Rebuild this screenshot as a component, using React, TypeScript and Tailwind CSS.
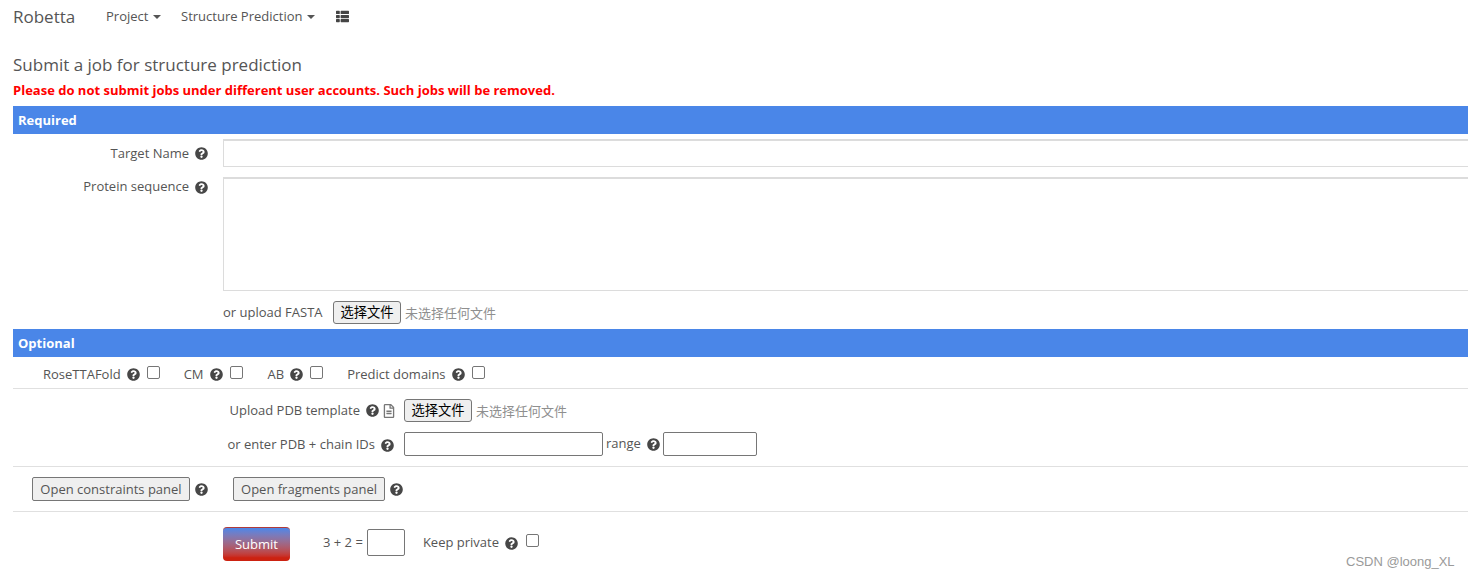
import { FaQuestionCircle, FaRegFileAlt, FaThList } from 'react-icons/fa';

const Help = ({ className = '' }: { className?: string }) => (
  <FaQuestionCircle className={`text-[13px] text-[#474747] shrink-0 ${className}`} />
);

const Caret = () => (
  <span className="inline-block ml-[5px] w-0 h-0 border-x-[4px] border-x-transparent border-t-[4px] border-t-[#555] align-middle" />
);

const Check = ({ className = '' }: { className?: string }) => (
  <span className={`inline-block w-[13px] h-[13px] rounded-[2px] border border-[#767676] bg-white shrink-0 ${className}`} />
);

const Divider = () => <div className="h-px bg-[#e0e0e0]" />;

const FileInput = () => (
  <div className="flex items-center">
    <button className="h-[23px] w-[68px] rounded-[3px] border border-[#767676] bg-[#efefef] text-[13.3px] text-black leading-none">
      选择文件
    </button>
    <span className="ml-[4px] pt-[2px] text-[13px] text-[#8f8f8f]">未选择任何文件</span>
  </div>
);

const SectionBar = ({ title }: { title: string }) => (
  <div className="h-[28px] bg-[#4a86e8] pl-[5px] pt-[2px] flex items-center text-[13px] font-bold text-white">{title}</div>
);

const Label = ({ text, className = '' }: { text: string; className?: string }) => (
  <span className={`flex items-center gap-[6px] ${className}`}>
    {text}
    <Help />
  </span>
);

export default function App() {
  return (
    <div
      className="relative h-[576px] w-[1468px] overflow-hidden bg-white text-[13px] text-[#555]"
      style={{ fontFamily: '"Open Sans", "Noto Sans CJK SC", sans-serif' }}
    >
      <nav className="flex h-[33px] items-center pl-[13px]">
        <span className="w-[93px] text-[17px] text-[#555]">Robetta</span>
        <span className="w-[75px]">Project<Caret /></span>
        <span className="w-[155px]">Structure Prediction<Caret /></span>
        <FaThList className="text-[13px] text-[#444]" />
      </nav>

      <div className="pl-[13px]">
        <h1 className="mt-[20px] h-[24px] text-[17px] leading-[24px] text-[#555]">Submit a job for structure prediction</h1>
        <p className="mt-[4px] h-[25px] text-[13px] font-bold leading-[18px] text-[#ff0000]">
          Please do not submit jobs under different user accounts. Such jobs will be removed.
        </p>

        <SectionBar title="Required" />

        <div className="mt-[5px] flex h-[28px] items-center">
          <div className="flex w-[210px] shrink-0 justify-end pr-[15px] pt-[1px]">
            <Label text="Target Name" />
          </div>
          <input className="h-[28px] w-[1260px] shrink-0 border border-[#dcdcdc] border-t-2 outline-none" />
        </div>

        <div className="mt-[10px] flex h-[114px]">
          <div className="flex w-[210px] shrink-0 justify-end pr-[15px] pt-[1px]">
            <Label text="Protein sequence" className="h-[18px]" />
          </div>
          <textarea className="h-[114px] w-[1260px] shrink-0 resize-none border border-[#dcdcdc] border-t-2 outline-none" />
        </div>

        <div className="mt-[10px] flex h-[23px] items-center pl-[210px]">
          <span className="w-[110px]">or upload FASTA</span>
          <FileInput />
        </div>

        <div className="mt-[5px]">
          <SectionBar title="Optional" />
        </div>

        <div className="flex h-[31px] items-center pl-[30px] pt-[4px]">
          <Label text="RoseTTAFold" className="mr-[7px]" />
          <Check className="mb-[4px]" />
          <Label text="CM" className="ml-[24px] mr-[7px]" />
          <Check className="mb-[4px]" />
          <Label text="AB" className="ml-[25px] mr-[7px]" />
          <Check className="mb-[4px]" />
          <Label text="Predict domains" className="ml-[24px] mr-[7px]" />
          <Check className="mb-[4px]" />
        </div>
        <Divider />

        <div className="mt-[10px] flex h-[23px] items-center">
          <div className="flex w-[391px] items-center justify-end gap-[3px] pr-[8px]">
            <Label text="Upload PDB template" />
            <FaRegFileAlt className="text-[14px] text-[#777]" />
          </div>
          <FileInput />
        </div>

        <div className="mt-[10px] flex h-[24px] items-center">
          <div className="flex w-[391px] justify-end pr-[10px] pt-[2px]">
            <Label text="or enter PDB + chain IDs" />
          </div>
          <input className="h-[24px] w-[199px] rounded-[2px] border border-[#767676] outline-none" />
          <Label text="range" className="ml-[3px] mr-[3px]" />
          <input className="h-[24px] w-[94px] rounded-[2px] border border-[#767676] outline-none" />
        </div>

        <div className="mt-[10px]"><Divider /></div>

        <div className="mt-[10px] flex h-[24px] items-center pl-[19px]">
          <button className="h-[24px] w-[158px] rounded-[2px] border border-[#767676] bg-[#efefef] pt-[2px] text-[13px] text-[#555]">
            Open constraints panel
          </button>
          <Help className="ml-[5px]" />
          <button className="ml-[25px] h-[24px] w-[152px] rounded-[2px] border border-[#767676] bg-[#efefef] pt-[2px] text-[13px] text-[#555]">
            Open fragments panel
          </button>
          <Help className="ml-[5px]" />
        </div>

        <div className="mt-[10px]"><Divider /></div>

        <div className="mt-[15px] flex h-[34px] items-center pl-[210px]">
          <button className="h-[34px] w-[67px] rounded-[4px] border-t border-t-[#b03a3a] bg-gradient-to-b from-[#4a86e8] to-[#cc2211] to-90% text-[13px] text-white">
            Submit
          </button>
          <span className="ml-[33px] mb-[2px]">3 + 2 =</span>
          <input className="ml-[4px] mb-[4px] h-[27px] w-[38px] rounded-[2px] border border-[#767676] outline-none" />
          <Label text="Keep private" className="ml-[18px] mr-[8px] mb-[2px]" />
          <Check className="mb-[8px]" />
        </div>
      </div>

      <span
        className="absolute left-[1346px] top-[552px] text-[13px] text-[#9a9a9a]"
        style={{ fontFamily: '"Liberation Sans", sans-serif' }}
      >
        CSDN @loong_XL
      </span>
    </div>
  );
}
